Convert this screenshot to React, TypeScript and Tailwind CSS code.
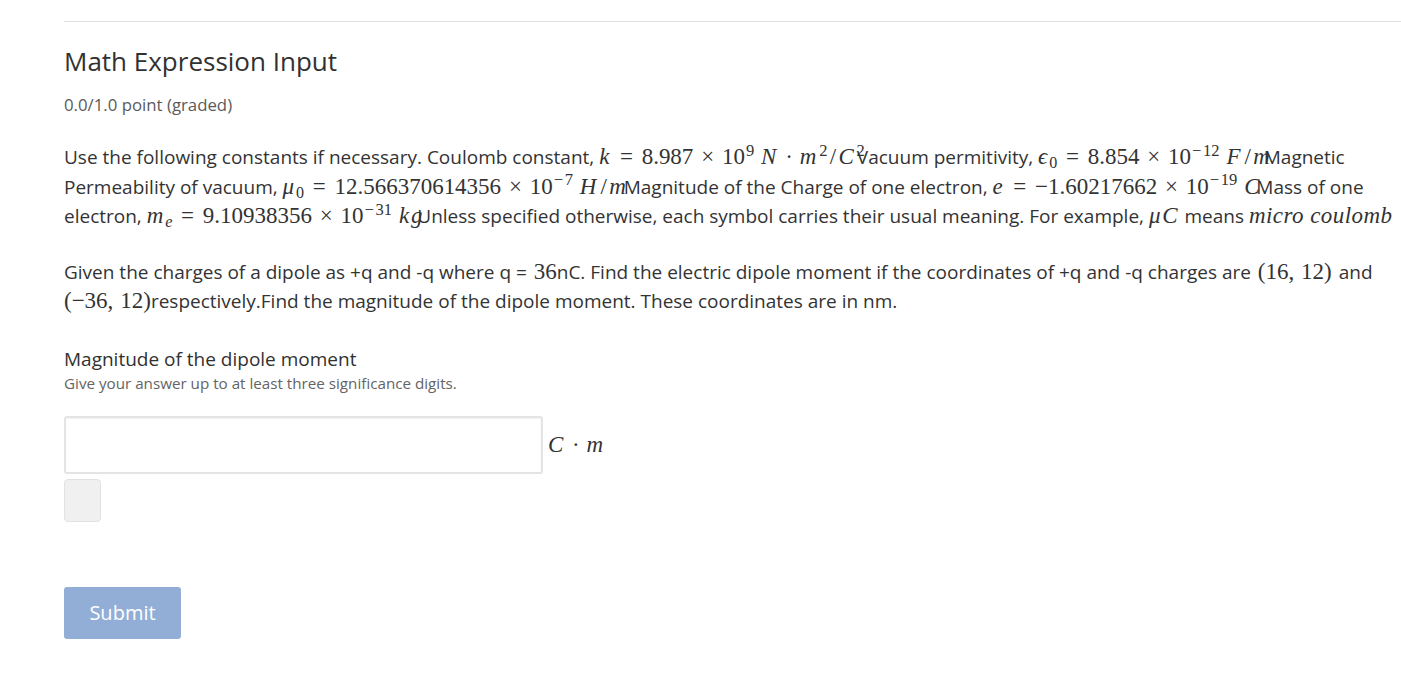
import React from "react";

const sans = { fontFamily: '"Open Sans", "Noto Sans", sans-serif' };
const serif = { fontFamily: '"Liberation Serif", "DejaVu Serif", serif' };

function M({ children, className = "" }: { children: React.ReactNode; className?: string }) {
  return (
    <span className={`whitespace-nowrap text-[1.21em] leading-none ${className}`} style={serif}>
      {children}
    </span>
  );
}

// math italic is wider in the reference, so spread the letters a bit
const I = ({ children, className = "tracking-[0.08em]" }: { children: React.ReactNode; className?: string }) => (
  <i className={`italic ${className}`}>{children}</i>
);
const Sup = ({ children }: { children: React.ReactNode }) => <sup className="ml-[0.06em] text-[0.72em]">{children}</sup>;
const Neg = () => <span className="mr-[0.1em]">−</span>;
const Sub = ({ children, italic }: { children: React.ReactNode; italic?: boolean }) => (
  <sub className={`text-[0.7em] ${italic ? "italic" : ""}`}>{children}</sub>
);

const Eq = () => <span className="mx-[0.38em]">=</span>;
const Times = () => <span className="mx-[0.34em]">×</span>;
const Dot = () => <span className="mx-[0.3em]">·</span>;
const Slash = () => <span className="mx-[0.1em]">/</span>;
const Sp = () => <span className="inline-block w-[0.3em]" />;

export default function App() {
  return (
    <div className="min-h-screen bg-white pl-16 text-[#333]" style={sans}>
      <div className="h-[21px]" />
      <hr className="border-0 border-t border-[#e0e0e0]" />

      <h1 className="mt-[23px] text-[26px] leading-[32px] text-[#313131]">Math Expression Input</h1>
      <div className="mt-[16px] text-[16.8px] leading-[24px] text-[#5a5a5a]">0.0/1.0 point (graded)</div>

      <p className="mt-[26px] whitespace-nowrap text-[19px] leading-[29.5px]">
        Use the following constants if necessary. Coulomb constant,{" "}
        <M className="-mr-[8px]">
          <I>k</I>
          <Eq />
          8.987
          <Times />
          10<Sup>9</Sup>
          <Sp />
          <I>N</I>
          <Dot />
          <I>m</I>
          <Sup>2</Sup>
          <Slash />
          <I>C</I>
          <Sup>2</Sup>
        </M>
        Vacuum permitivity,{" "}
        <M className="-mr-[8px]">
          <I>ϵ</I>
          <Sub>0</Sub>
          <Eq />
          8.854
          <Times />
          10
          <Sup>
            <Neg />
            12
          </Sup>
          <Sp />
          <I>F</I>
          <Slash />
          <I>m</I>
        </M>
        Magnetic
        <br />
        Permeability of vacuum,{" "}
        <M className="-mr-[4px]">
          <I>μ</I>
          <Sub>0</Sub>
          <Eq />
          12.566370614356
          <Times />
          10
          <Sup>
            <Neg />7
          </Sup>
          <Sp />
          <I>H</I>
          <Slash />
          <I>m</I>
        </M>
        Magnitude of the Charge of one electron,{" "}
        <M className="-mr-[5px]">
          <I>e</I>
          <Eq />
          −1.60217662
          <Times />
          10
          <Sup>
            <Neg />
            19
          </Sup>
          <Sp />
          <I>C</I>
        </M>
        Mass of one
        <br />
        electron,{" "}
        <M className="-mr-[7px]">
          <I>m</I>
          <Sub italic>e</Sub>
          <Eq />
          9.10938356
          <Times />
          10
          <Sup>
            <Neg />
            31
          </Sup>
          <Sp />
          <I>kg</I>
        </M>
        Unless specified otherwise, each symbol carries their usual meaning. For example,{" "}
        <M>
          <I>μC</I>
        </M>{" "}
        means{" "}
        <M>
          <I className="tracking-[0.02em]">micro coulomb</I>
        </M>
      </p>

      <p className="mt-[26px] whitespace-nowrap text-[19px] leading-[29.5px]">
        Given the charges of a dipole as +q and -q where q = <M className="ml-[2px]">36</M>nC. Find the electric dipole moment if the
        coordinates of +q and -q charges are{" "}
        <M className="mx-[2px]">
          (16,
          <Sp />
          12)
        </M>{" "}
        and
        <br />
        <M>
          (−36,
          <Sp />
          12)
        </M>
        respectively.Find the magnitude of the dipole moment. These coordinates are in nm.
      </p>

      <div className="mt-[30px] text-[19px] leading-[24px] text-[#313131]">Magnitude of the dipole moment</div>
      <div className="mt-[2px] text-[15.2px] leading-[20px] text-[#646464]">Give your answer up to at least three significance digits.</div>

      <div className="mt-[23px] flex items-start">
        <input
          type="text"
          className="h-[58px] w-[479px] rounded-[3px] border-2 border-[#e4e4e4] bg-white px-3 text-[18px] outline-none shadow-[inset_0_1px_2px_rgba(0,0,0,0.06)]"
        />
        <span className="ml-[5px] mt-[15px] text-[19px]">
          <M>
            <I>C</I>
            <Dot />
            <I>m</I>
          </M>
        </span>
      </div>
      <div className="mt-[5px] h-[43px] w-[37px] rounded-[4px] border border-[#e2e2e2] bg-[#f0f0f0]" />

      <button className="mt-[65px] h-[52px] w-[117px] rounded-[3px] bg-[#93aed6] text-[20px] text-white">Submit</button>
    </div>
  );
}
